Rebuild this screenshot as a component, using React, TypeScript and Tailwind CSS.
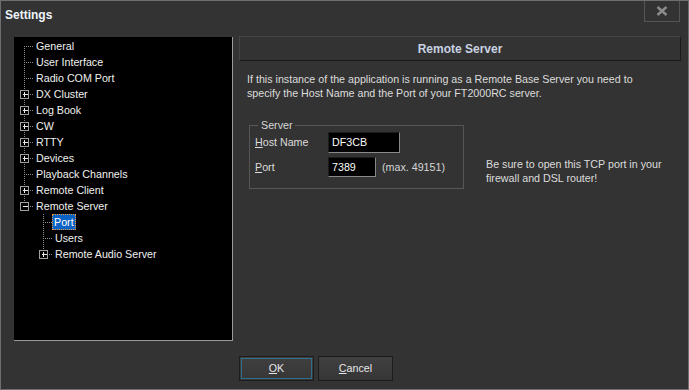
import React from "react";

type Item = {
  label: string;
  level: number;
  box?: "+" | "-";
  first?: boolean;
  last?: boolean;
  selected?: boolean;
};

const items: Item[] = [
  { label: "General", level: 0, first: true },
  { label: "User Interface", level: 0 },
  { label: "Radio COM Port", level: 0 },
  { label: "DX Cluster", level: 0, box: "+" },
  { label: "Log Book", level: 0, box: "+" },
  { label: "CW", level: 0, box: "+" },
  { label: "RTTY", level: 0, box: "+" },
  { label: "Devices", level: 0, box: "+" },
  { label: "Playback Channels", level: 0 },
  { label: "Remote Client", level: 0, box: "+" },
  { label: "Remote Server", level: 0, box: "-", last: true },
  { label: "Port", level: 1, first: true, selected: true },
  { label: "Users", level: 1 },
  { label: "Remote Audio Server", level: 1, box: "+", last: true },
];

function Connector({ it }: { it: Item }) {
  const w = 22 + it.level * 19;
  const cx = 10.5 + it.level * 19;
  const y1 = it.first && it.level === 0 ? 8 : 0;
  const y2 = it.last ? 8 : 16;
  return (
    <svg width={w} height={16} className="shrink-0" shapeRendering="crispEdges">
      <line x1={cx} y1={y1} x2={cx} y2={y2} stroke="#8a8a8a" strokeDasharray="1 1" />
      <line x1={cx + 1} y1={8.5} x2={cx + 9} y2={8.5} stroke="#8a8a8a" strokeDasharray="1 1" />
      {it.box && (
        <g>
          <rect x={cx - 4} y={4.5} width={8} height={8} fill="#000" stroke="#a0a0a0" />
          <line x1={cx - 2} y1={8.5} x2={cx + 3} y2={8.5} stroke="#e8e8e8" />
          {it.box === "+" && <line x1={cx} y1={6} x2={cx} y2={11} stroke="#e8e8e8" />}
        </g>
      )}
    </svg>
  );
}

export default function App() {
  return (
    <div
      className="w-[689px] h-[390px] bg-[#333333] border border-[#6e6e6e] flex flex-col text-[10.7px] text-[#e6e6e6] overflow-hidden select-none"
      style={{ fontFamily: '"Liberation Sans", Arial, sans-serif' }}
    >
      {/* Title bar */}
      <div className="flex items-start justify-between h-[35px]">
        <div className="pl-[4px] pt-[5px] text-[12px] font-bold text-[#eef3fb]">Settings</div>
        <div className="mr-[8px] -mt-px w-[36px] h-[22px] border border-[#555555] flex items-center justify-center">
          <svg width="12" height="10" viewBox="0 0 12 10">
            <path d="M1.5 1 L10.5 9 M10.5 1 L1.5 9" stroke="#8c8c8c" strokeWidth="2.4" />
          </svg>
        </div>
      </div>

      {/* Body */}
      <div className="flex pl-[13px] items-start">
        {/* Tree */}
        <div className="mt-px w-[219px] h-[304px] bg-black border-r border-b border-[#9a9a9a] pt-px flex flex-col">
          {items.map((it) => (
            <div key={it.label} className="flex items-center h-[16px]">
              <Connector it={it} />
              {it.selected ? (
                <span className="-ml-[3px] h-[16px] px-[1px] bg-[#0b62c4] border border-dotted border-[#f09a3a] text-white leading-[14px]">
                  {it.label}
                </span>
              ) : (
                <span className="leading-[16px] text-[#f0f0f0] whitespace-nowrap">{it.label}</span>
              )}
            </div>
          ))}
        </div>

        {/* Right */}
        <div className="ml-[6px] w-[442px] h-[345px] flex flex-col">
          <div className="h-[25px] border border-t-[#454545] border-l-[#454545] border-b-[#1a1a1a] border-r-[#1a1a1a] flex items-center justify-center">
            <span className="text-[12px] font-bold text-[#c9d2e2]">Remote Server</span>
          </div>
          <div className="mt-[11px] pl-[8px] leading-[14px] text-[#dcdcdc]">
            <div>If this instance of the application is running as a Remote Base Server you need to</div>
            <div>specify the Host Name and the Port of your FT2000RC server.</div>
          </div>

          <div className="flex items-end mt-[19px]">
            <fieldset className="ml-[10px] w-[215px] h-[70px] border border-[#565656] px-[5px] pb-[6px]">
              <legend className="ml-[3px] px-[3px] text-[#d6d6d6] leading-[12px]">Server</legend>
              <div className="flex items-center h-[21px] mt-[1px]">
                <span className="w-[73px] text-[#dcdcdc]">
                  <span className="underline">H</span>ost Name
                </span>
                <div className="w-[72px] h-[21px] bg-black border border-t-[#1c1c1c] border-l-[#1c1c1c] border-b-[#8a8a8a] border-r-[#8a8a8a] pl-[3px] flex items-center text-white">
                  DF3CB
                </div>
              </div>
              <div className="flex items-center h-[20px] mt-[4px]">
                <span className="w-[73px] text-[#dcdcdc]">
                  <span className="underline">P</span>ort
                </span>
                <div className="w-[48px] h-[20px] bg-black border border-t-[#1c1c1c] border-l-[#1c1c1c] border-b-[#8a8a8a] border-r-[#8a8a8a] pl-[3px] flex items-center text-white">
                  7389
                </div>
                <span className="ml-[6px] text-[#d6d6d6]">(max. 49151)</span>
              </div>
            </fieldset>
            <div className="ml-[22px] mb-[4px] leading-[14px] text-[#dcdcdc]">
              <div>Be sure to open this TCP port in your</div>
              <div>firewall and DSL router!</div>
            </div>
          </div>

          <div className="mt-auto flex gap-[4px]">
            <button className="w-[75px] h-[25px] bg-gradient-to-b from-[#404040] to-[#363636] border border-[#1c1c1c] p-px">
              <div className="w-full h-full border border-[#2f6f8c] flex items-center justify-center text-[#e6e6e6]">
                <span className="underline">O</span>K
              </div>
            </button>
            <button className="w-[75px] h-[25px] bg-gradient-to-b from-[#404040] to-[#363636] border border-[#1c1c1c] flex items-center justify-center text-[#e6e6e6]">
              <span>
                <span className="underline">C</span>ancel
              </span>
            </button>
          </div>
        </div>
      </div>
    </div>
  );
}
